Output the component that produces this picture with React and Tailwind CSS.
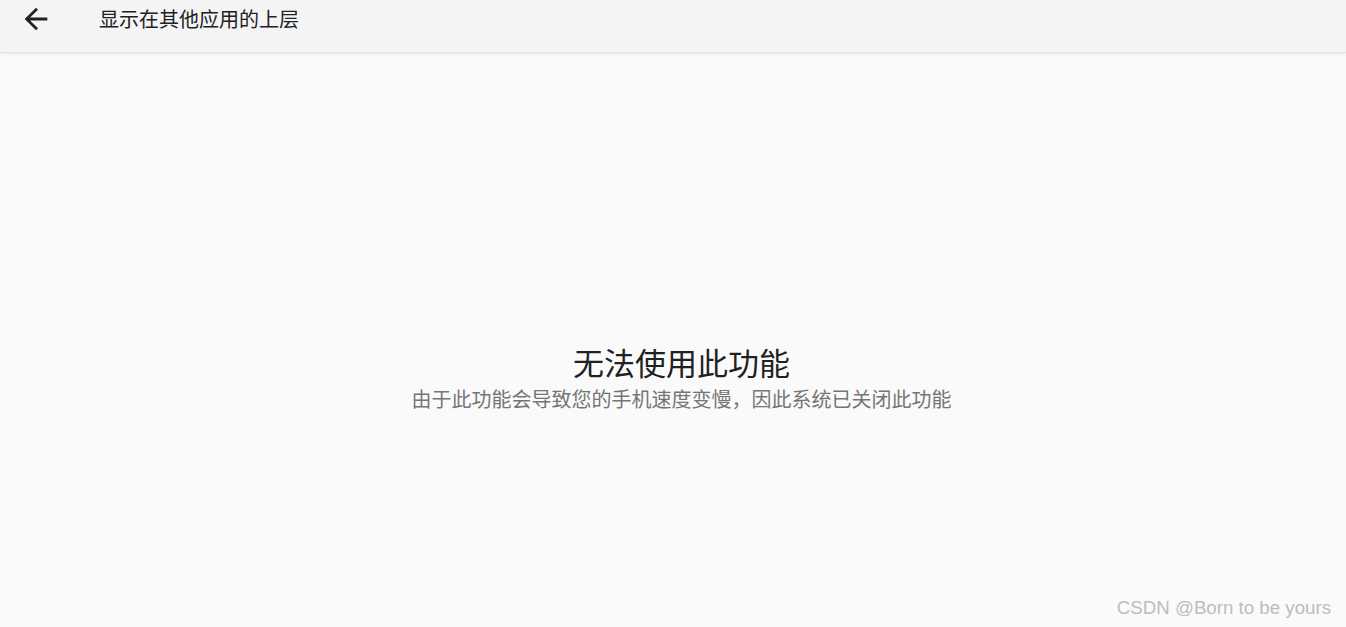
export default function App() {
  return (
    <div
      className="relative w-[1346px] h-[627px] bg-[#fafafa] flex flex-col overflow-hidden"
      style={{ fontFamily: '"Noto Sans CJK SC", "Noto Sans", sans-serif' }}
    >
      <header className="h-[53px] shrink-0 bg-[#f4f4f4] border-b border-[#e2e2e2] shadow-[0_1px_3px_rgba(0,0,0,0.08)] flex items-start">
        <div className="w-[34px] h-[34px] ml-[19px] mt-[2px] shrink-0">
          <svg viewBox="0 0 24 24" width="34" height="34" fill="#212121">
            <path d="M20 11H7.83l5.59-5.59L12 4l-8 8 8 8 1.41-1.41L7.83 13H20v-2z" />
          </svg>
        </div>
        <div className="ml-[46px] mt-[6px] text-[20px] leading-[26px] text-[#212121]">
          显示在其他应用的上层
        </div>
      </header>
      <main className="flex-1 flex flex-col items-center pt-[290px] pl-[17px]">
        <div className="text-[31px] leading-[38px] text-[#212121]">无法使用此功能</div>
        <div className="mt-[6px] text-[20px] leading-[24px] text-[#757575]">
          由于此功能会导致您的手机速度变慢，因此系统已关闭此功能
        </div>
      </main>
      <div
        className="absolute right-[15px] bottom-[8px] text-[18.7px] leading-[22px] text-[#bdbdbd]"
        style={{ fontFamily: '"Liberation Sans", Arial, sans-serif' }}
      >
        CSDN @Born to be yours
      </div>
    </div>
  );
}
